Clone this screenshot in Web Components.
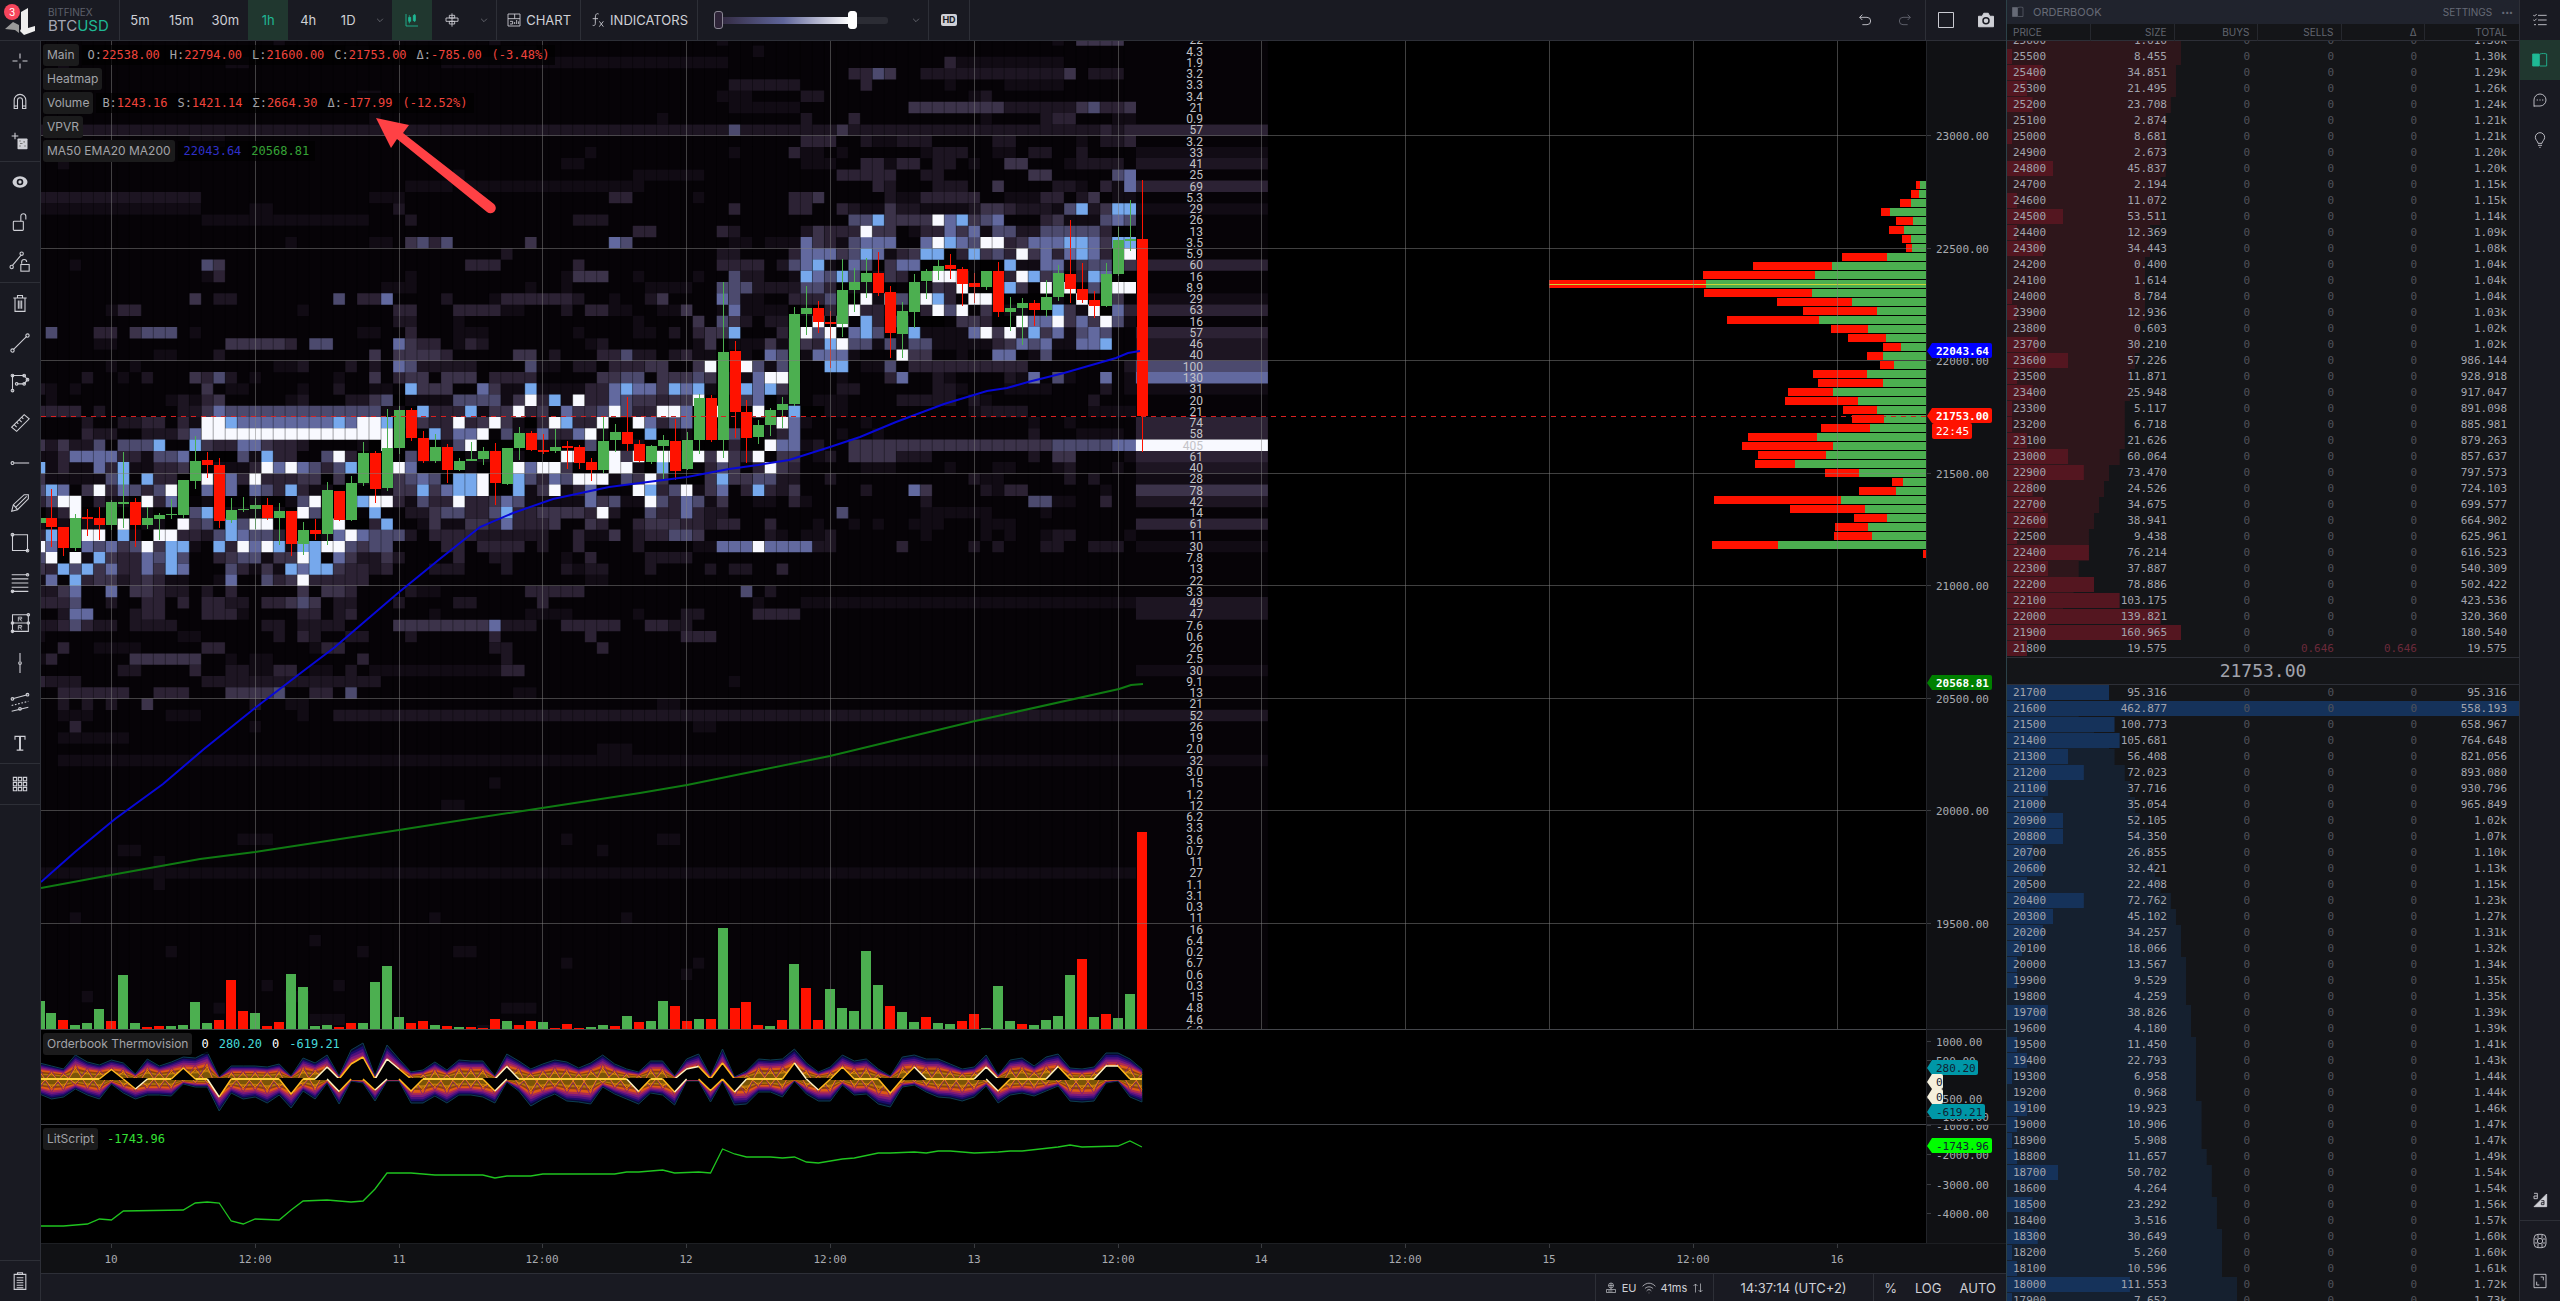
<!DOCTYPE html>
<html lang="en">
<head>
<meta charset="utf-8">
<title>BTCUSD</title>
<style>
    html, body { margin: 0; height: 100%; background: #000; }
    body {
        --panel: #191a22;
        --line: #2d2f37;
        --axis: #101114;
        --accent: #1fb894;
        --active: #20372f;
        --mono: "DejaVu Sans Mono", "Liberation Mono", monospace;
        font: 13px Inter, Roboto, sans-serif;
        color: #cfd0d6;
    }
</style>
</head>
<body>
<trade-app></trade-app>

<script>
const ICONS = {
    cross: `<path d="M12 3v6M12 15v6M3 12h6M15 12h6"/>`,
    magnet: `<path d="M5 21V11a7 7 0 0 1 14 0v10h-4V11a3 3 0 0 0-6 0v10zM5 18h4M15 18h4"/>`,
    heatpick: `<path d="M6 2v8M2 6h8"/><rect x="9" y="9" width="12" height="13" rx="1" fill="currentColor" stroke="none"/><path stroke="#777" d="M11 12h2M12 15h3M11 18h2M16 13h2M17 18h2"/>`,
    eye: `<ellipse cx="12" cy="12" rx="9" ry="7" fill="currentColor" stroke="none"/><circle cx="12" cy="12" r="3" stroke="#191a22" stroke-width="2"/>`,
    unlock: `<rect x="4" y="11" width="12" height="11" rx="1"/><path d="M13 11V5a3 3 0 0 1 6 0v4"/>`,
    linelock: `<circle cx="2" cy="18" r="2"/><circle cx="14" cy="2" r="2"/><path d="M3 16 13 4M14 14v-2a3 3 0 0 1 6 0"/><rect x="13" y="15" width="10" height="8"/>`,
    trash: `<path d="M4 6h16M9 6V3h6v3M6 6v16h12V6M10 9v10M12 9v10M14 9v10"/>`,
    trend: `<path d="M4 20 20 4"/><circle cx="3" cy="21" r="2"/><circle cx="21" cy="3" r="2"/>`,
    poly: `<path d="M3 21V3h14l4 5-4 5H8"/><circle cx="3" cy="3" r="1.6"/><circle cx="17" cy="3" r="1.6"/><circle cx="21" cy="8" r="1.6"/><circle cx="17" cy="13" r="1.6"/><circle cx="8" cy="13" r="1.6"/><circle cx="3" cy="21" r="1.6"/>`,
    ruler: `<path d="M2 17 17 2l6 5L8 22zM5 14l3 3M8 11l2 2M11 8l3 3M14 5l2 2"/>`,
    ray: `<circle cx="3" cy="12" r="1.7"/><path d="M5 12h18"/>`,
    pencil: `<path d="M2 22l2-8L17 2h5v5L9 20zM4 14l5 6M7 17 20 4"/>`,
    rect: `<path d="M3 2h18v19H3z"/><circle cx="3" cy="2" r="1.6"/><circle cx="21" cy="21" r="1.6"/>`,
    fib: `<path d="M2 2h20M2 7h20M2 12h20M2 17h20M2 22h20"/><circle cx="21" cy="2" r="1.5"/><circle cx="3" cy="22" r="1.5"/>`,
    risk: `<path d="M3 2h19v20H3zM3 12h19"/><path stroke-width="1" d="M10 10V5h4v2h-4M12 7l2 3M10 20v-5h4v2h-4M12 17l2 3"/><circle cx="22" cy="2" r="1.5"/><circle cx="22" cy="12" r="1.5"/><circle cx="3" cy="12" r="1.5"/><circle cx="3" cy="22" r="1.5"/>`,
    vline: `<path d="M12 0v10M12 14v10"/><circle cx="12" cy="12" r="1.6"/>`,
    channel: `<path d="M3 7 21 2M2 22l20-5"/><path stroke-dasharray="2 2" d="M2 15l20-5"/><circle cx="3" cy="7" r="1.6"/><circle cx="21" cy="2" r="1.6"/><circle cx="12" cy="19" r="1.6"/>`,
    text: `<path d="M11.5 4v16M12.5 4v16M8 20.5h8M6 8V4h12v4"/>`,
    grid: `<path d="M4 4h4v4H4zM10 4h4v4h-4zM16 4h4v4h-4zM4 10h4v4H4zM10 10h4v4h-4zM16 10h4v4h-4zM4 16h4v4H4zM10 16h4v4h-4zM16 16h4v4h-4z"/>`,
    clip: `<path d="M5 4h14v18H5zM9 4V2h6v2M8 8h8M8 11h8M8 14h8M8 17h8M8 20h8"/>`,
    chevron: `<path d="M5 9l7 7 7-7"/>`,
    candles: `<path d="M3 3v18h18M8 5v2M8 14v3M16 3v2M16 12v3"/><path fill="currentColor" d="M7 8h3v6H7zM14 5h3v8h-3z"/>`,
    footprint: `<path d="M12 2v20M8 5h8v4H8zM3 9h18v5H3zM8 14h8v4H8z"/>`,
    layout: `<path d="M3 3h18v18H3zM3 10h18M13 3v7M6 14h4v4H6M13 18v-3M16 18v-6M19 18v-4"/>`,
    fx: `<path d="M13 3c-4-2-5 2-5 6v8c0 3-2 4-4 3M4 10h8M14 14l6 8M20 14l-6 8"/>`,
    undo: `<path d="M8 4 4 8l4 4M4 8h11a5 5 0 0 1 0 11H8"/>`,
    redo: `<path d="M16 4l4 4-4 4M20 8H9a5 5 0 0 0 0 11h7"/>`,
    square: `<path d="M2 2h20v20H2z"/>`,
    camera: `<path fill="currentColor" d="M2 7h5l2-4h6l2 4h5v14H2z"/><circle cx="12" cy="13" r="4" fill="currentColor" stroke="#191a22" stroke-width="2"/>`,
    list: `<path d="M9 5h13M9 12h13M9 19h13M2 5l2 1 3-3M2 12l2 1 3-3M3 19h3"/>`,
    book: `<path fill="currentColor" d="M1 3h10v18H1z"/><path d="M12 3c3-1 7-1 10 0v18h-10"/>`,
    chat: `<path d="M3 22V12a9 9 0 1 1 9 9H3M7 12h2M11 12h2M15 12h2"/>`,
    bulb: `<path d="M9 17c0-3-4-5-4-9a7 7 0 0 1 14 0c0 4-4 6-4 9zM9 20h6M11 23h2"/>`,
    contrast: `<path fill="currentColor" d="M22 3v19H3z"/><path d="M3 2h5v8H3V6h5"/><path stroke="#191a22" d="M14 13h4v6h-4v-3h4"/>`,
    help: `<rect x="3" y="2" width="18" height="20" rx="6"/><circle cx="12" cy="12" r="4"/><path d="M9 3v5M15 3v5M9 16v5M15 16v5M4 9h4M4 15h4M16 9h4M16 15h4"/>`,
    expand: `<path d="M3 2h18v20H3zM13 6h4v5M11 18H7v-5"/>`,
    server: `<circle cx="12" cy="7" r="5"/><path d="M7 7h10M12 2v10M12 12v3M3 15h18v6H3zM6 18h9"/>`,
    wifi: `<path d="M1 9c7-7 15-7 22 0M5 13c4-4 10-4 14 0M8 17c2-3 6-3 8 0M12 20v1"/>`,
    updown: `<path d="M7 21V4M3 8l4-4 4 4M17 3v17M13 16l4 4 4-4"/>`
}

const icon = (name, size = 18) =>
    `<svg width="${size}" height="${size}" viewBox="0 0 24 24" fill="none" stroke="currentColor" stroke-width="1.3" aria-hidden="true">${ICONS[name]}</svg>`

const BUTTON = `
    *, *::before { box-sizing: border-box; }
    svg { display: block; flex: none; overflow: visible; }
    button {
        all: unset;
        box-sizing: border-box;
        display: flex;
        align-items: center;
        justify-content: center;
        min-width: 40px;
        height: 40px;
        cursor: pointer;
    }
    button.on { background: var(--active); color: var(--accent); }
`

/* ---------- chart data, one entry per hourly column ---------- */

const COL = 11.983, ROW = 11.257
const colX = c => c * COL - 1.5
const rowY = r => r * ROW - 6.7

// direction, body top, body bottom, wick top, wick bottom
const CANDLES = `
g477,482,477,482 r477,486,448,506 r486,507,486,515 g477,507,473,510 r476,478,468,495 r477,484,466,499 g461,484,459,489 g461,463,411,487
r461,484,457,506 g477,484,466,488 g474,478,472,499 g473,474,458,478 g439,474,439,477 g420,440,395,448 r419,424,411,437 r424,480,417,487
g469,479,457,482 g468,469,456,471 g464,468,457,488 r464,477,457,479 g470,477,462,504 r470,503,470,515 g489,503,481,514 r489,493,478,499
g449,493,441,504 r450,479,450,480 g442,479,435,480 g412,442,401,445 r412,448,410,462 g407,447,368,450 g369,407,365,413 r369,397,367,400
r397,420,390,422 g406,420,393,422 r406,429,403,442 g420,429,417,430 g418,420,401,420 g410,418,406,424 r410,442,402,464 g407,443,407,444
g392,407,386,419 r392,409,390,410 r409,411,393,413 g406,410,388,412 r405,407,400,428 r406,422,404,428 r421,429,417,440 g400,429,376,432
g391,399,383,411 r391,403,356,410 r403,420,399,421 g405,421,404,423 g399,405,394,439 r400,430,378,439 g399,428,391,429 g357,399,353,413
r357,399,354,401 g311,399,241,417 r310,371,300,397 r371,397,359,422 g384,396,379,403 g369,384,367,395 g363,369,356,387 g273,363,266,365
g267,273,245,294 r267,281,260,292 r281,283,270,327 g249,283,218,296 g241,249,227,271 g232,241,217,257 r232,252,211,255 r251,292,245,317
g270,293,261,317 g241,271,233,287 g230,240,228,258 g225,230,219,239 r224,228,213,238 r228,243,226,265 r242,246,232,262 g230,246,230,249
r230,271,221,276 g267,271,256,290 g262,267,257,304 r262,269,259,285 g256,269,239,276 g232,256,224,260 r233,248,179,262 r248,259,222,262
r259,265,250,277 g233,265,222,266 g199,233,186,235 g198,200,159,210 r198,375,139,411`.trim().split(/\s+/).map(s => [s[0], ...s.slice(1).split(",").map(Number)])

const VOLUMES = `g28 g16 r9 g4 g6 g20 r8 g54 g6 r2 r3 g3 g4 g27 g6 r9 r49 r18 g16 r3 r7 g55 g42 g3 g4 r2 r6 g6 g47 g63 g12 r6 r8 g4 r3 g2 r2 r1 r10 g8 r4 r8 g7 r1 r5 r1 g2 g4 r3 g13 r7 g8 g28 r23 r8 g10 r10 g101 r21 r27 r4 g3 r9 g65 r41 r9 g40 g21 g18 g78 g44 r23 g17 g7 r12 g6 g5 r8 r15 g1 g43 g8 r5 g4 g9 g13 g54 r70 g12 r15 g11 g35 r197`.split(" ")

// total length, buy length
const PROFILE = `10,6 15,7 26,15 45,36 30,13 37,22 24,15 20,14 84,39 173,94 223,111 377,220 222,114 149,74 123,49 199,107 95,58 78,40 43,25 59,43 46,32 113,59 108,43 138,93 141,68 83,49 74,42 105,56 178,109 184,93 168,100 171,131 101,67 34,23 67,30 212,85 136,61 72,39 91,58 92,54 214,148 3,0`.split(" ").map(s => s.split(",").map(Number))

const DEPTH = `22 4.3 1.9 3.2 3.3 3.4 21 0.9 57 3.2 33 41 25 69 5.3 29 26 13 3.5 5.9 60 16 8.9 29 63 16 57 46 40 100 130 31 20 21 74 58 405 61 40 28 78 42 14 61 11 30 7.8 13 22 3.3 49 47 7.6 0.6 26 2.5 30 9.1 13 21 52 26 19 2.0 32 3.0 15 1.2 12 6.2 3.3 3.6 0.7 11 27 1.1 3.1 0.3 11 16 6.4 0.2 6.7 0.6 0.3 15 4.8 4.6 6.2`.split(" ")

// row: column[-column]=level
const WALLS = `
0: 87-90=5
2: 34-57=2 76=4 77-85=2
3: 68-69=4 70=6 71=5 74-85=3 86=5 88-90=3
4: 0-20=1 58-63=3 69=4 81-85=2
5: 64-65=3 79=3
6: 58-63=2 73-80=5 81-86=3 87=5 88=6 89=4 90=4 91=5
7: 64=3 84=3 85-86=4
8: 0-57=3 58=6 59-66=3 67=5 68-88=3 89=4 90=3 91=4
9: 64-66=4 72=3 89=3
10: 58=2 75-77=3
11: 69-70=4 72-73=4 81-82=5
12: 50-55=2 67-69=4 71=4 83-84=5 90=6 91=7
13: 31-33=2 36-50=2 75-77=3 80=5 91=7
14: 0-13=3 48-49=4 65=5 74-78=4 88=5
15: 0-13=2 30=3 63-64=4 71=5 86=6 87=8 89=5 90-91=8
16: 14-27=2 31=3 45-47=3 69=6 70=8 74=5 75=9 76=7 77=8 78=5 79=6 80=7
17: 50-51=4 57=4 65=5 69=9 70-71=5 78=7 85-88=6
18: 28-29=2 31=5 32=6 33=4 34=6 41=5 48=7 49=6 64=7 68=6 69-71=7 75=9 76=8 77=7 79-80=9 82=5 83-85=7 86-87=8 88=7 89=5 90-91=8
19: 39=3 65=7 69=8 70=7 72=4 74=8 78=8 80=6 82=9 84=7 86=7 87=8 88=7 91=9
20: 14=6 15=5 36-38=4 45=4 64=7 65=8 69=6 72-73=7 81=8 84-85=7 88-89=6
21: 15=4 45-47=5 58=6 64=8 67=8 68=6 75-77=9 82=9 83=8 85=6 89=7
22: 58=6 60-63=3 65=6 77=9 81=8 84=9 86=9 90-91=9
23: 13=5 25=6 27-28=4 29=7 39-44=4 52=5 58=6 64-65=4 66=6 69=9 71=9 74=9 75=8 78-79=9 87=9
24: 7-8=4 31=4 35-38=4 54=5 58=7 68=9 75=9 77=9 85=8 88=9 90=7 91=4
25: 65=9 67=9 69=8 72=7 78=5 82=9 84=7 85=9 89=9
26: 1=6 5-6=4 8=5 9-11=6 31=4 64=9 65=6 66=9 68=7 69=8 70=6 73=8 78=7 79=9 81=9 83=8 85=7 87=6 88=7
27: 16-20=5 21=4 23-24=6 32-33=4 61=5 63-64=5 67=9 71=6 74=6 83=6 89=8
28: 28=5 30-31=5 40-41=5 49=6 61=7 66-67=7 72=9 84=6
29: 31=6 41=6 48-50=4 56=9 59=9 66-67=8 73-82=4
30: 13=5 14=4 15=6 28=5 32=5 34=5 61-62=9 72=7 83=7 85=6 89=7
31: 14=5 31=8 37=7 38=5 41=8 49=8 53=8 55=8 59=8 61=8
32: 28=5 37=6 41=9 43=8 45=9 53=5 55=9
33: 15=7 16-28=6 32=8 36=8 40=9 48=9 52-53=9 57=9 60=9 63=8
34: 14-15=9 16=8 17-24=7 25=8 26=7 27-28=9 29=8 35=9 38=9 43=9 44=8 47=9 50=9 62=9 63=7
35: 14-29=9 36=7 37=9 46=9 51=8 63=7
36: 5=6 9=6 10=8 13=8 29=9 61=9 62-63=7 68-84=5 85-89=6 90-91=7 92=9
37: 6=7 17=6 19=8 25=9 44-45=9 48=9 50=9 52-53=9 55=9 57=9 60=9 68-71=5 85-86=5
38: 0=8 7=8 19=9 21=9 30=9 40=9 42-43=9 48-49=9 61=9
39: 7=8 9=8 14=9 18=9 35-36=8 37=9 45-47=9 51=9 57=8
40: 1=8 5=9 11=9 14=7 16=7 18=7 21=8 32=8 35-36=8 37=9 40=8 43=9 51=8 54=9 57=7 60=8 73=7 74=5 81-82=4
41: 2-3=9 9=9 23=9 27=8 35=9 39=7 51=9 54=7 83-84=6 89=4
42: 3=9 14=8 22=9 39=8 47=9 54=7 67=6
43: 7=9 12=9 16=8 18-19=9 25=9 29=8 33=5 39=7 51-52=5
44: 1=8 4-5=9 10-11=9 16=8 26=9 37-42=3
45: 0=9 6=7 9=9 11=8 17=9 19=9 20=8 22-23=8 24=9 29=6 57-59=7 60=9 61-64=7 72=4
46: 1=9 3=9 5=8 9=7 11=8 22=9 23=8 29=5
47: 2=8 4=8 6=7 9=7 11=8 12=7 16=6 22=7 23-24=8 35=3 39=3
48: 3=8 5-6=5 9=5 22=9
49: 2=5 3=7 22=5 24-25=5 41-45=4 59=6
50: 1=4 3=6 9-10=4 14-15=4 64-91=2
51: 2=3 9-10=4 22=4 60-63=4
52: 2=4 3=6 4=4 30-37=5 38=7 44-48=4
53: 22=4 31=3 54-56=4
54: 14-15=4 47=4
55: 1=4 8-13=5 27=4 39=3
56: 7-8=3 13=4 29-38=2 39-40=4
57: 0=4 14-28=3
58: 2-7=4 10-12=4 16-19=5 20=6 23-24=4 26=6
59: 2=3 4=3 6=3 9=5 18=3
60: 11-13=2 25-91=3
61: 3=4
62: 2-7=2
64: 2-91=2
74: 0-91=2
79: 0-91=1`

const LEVELS = ["#020102", "#060307", "#110b14", "#1d1522", "#2c2234", "#3c334a", "#4c4a6e", "#62699f", "#76a8ec", "#f8f9ff"]

const MA50 = "41,882 75,852 115,819 163,784 204,749 255,708 302,672 335,647 398,593 441,558 480,527 513,513 553,499 609,487 640,483 687,477 729,469 758,465 789,460 830,447 860,437 896,422 944,404 987,391 1007,388 1028,382 1064,373 1116,358 1128,353 1140,351"
const MA200 = "41,888 111,875 200,859 255,852 399,830 463,820 542,808 640,793 687,785 746,773 830,756 975,721 1119,689 1131,685 1143,684"

// thermovision envelope above and below zero
const THERMO = `16,15 13,20 10,18 24,10 17,16 14,20 19,5 16,14 5,20 20,16 13,16 17,17 22,5 21,8 27,8 2,32 13,14 13,20 13,18 12,24 15,16 3,29 21,12 16,20 24,4 3,25 29,2 36,4 3,22 34,2 20,2 7,24 9,24 17,17 9,24 19,16 18,16 18,18 3,24 25,3 18,12 10,27 15,20 19,15 17,22 11,23 16,25 24,8 15,15 10,20 7,25 18,14 18,16 3,26 20,2 25,2 3,23 30,2 2,26 8,25 20,13 19,13 20,18 30,2 16,15 7,22 12,22 24,6 18,16 20,15 10,25 3,28 22,8 24,6 20,13 20,18 15,19 10,22 12,18 24,7 4,24 19,16 21,14 13,17 22,12 25,7 11,22 10,23 12,22 26,4 26,2 20,18 10,23`.split(" ").map(s => s.split(",").map(Number))

const LIT = "0,101 2,101 4,99 5,94 6,95 7,86 12,85 13,78 14,77 15,78 16,96 17,99 18,94 20,95 21,85 22,76 24,75 26,77 27,76 28,64 29,48 31,48 33,50 37,50 38,53 39,51 41,51 42,49 48,49 49,47 50,47 52,45 53,48 55,47 56,48 57,24 58,29 59,32 61,32 62,33 63,32 64,37 65,38 66,36 67,34 68,33 70,28 71,28 73,27 74,28 75,26 76,26 78,28 80,27 81,26 82,26 85,22 86,20 87,22 90,21 91,16 92,22"

function heatLevels() {
    let seed = 20607
    const rand = () => (seed = (seed * 1103515245 + 12345) % 2147483648) / 2147483648
    const rows = []
    for (let r = 0; r < 89; r++) {
        const row = []
        for (let c = 0; c < 92; c++) {
            const [, top, bottom] = CANDLES[c]
            const y = rowY(r) + ROW / 2
            const d = y < top ? (top - y) / ROW : y > bottom ? (y - bottom) / ROW : 0
            const quiet = c > 63 && y > bottom && d > 4
            const n = rand(), keep = rand() < .3 && c > 0
            let level
            if (d < 1) level = n < .7 ? 0 : 2
            else if (quiet) level = r > 45 ? 1 : n < .7 ? 1 : n < .9 ? 2 : 3
            else if (d < 3) level = n < .02 ? 9 : n < .06 ? 8 : n < .24 ? 7 : n < .42 ? 6 : n < .65 ? 5 : n < .85 ? 4 : 1
            else if (d < 6) level = n < .06 ? 7 : n < .2 ? 6 : n < .42 ? 5 : n < .7 ? 4 : 2
            else if (d < 9) level = n < .04 ? 5 : n < .2 ? 4 : n < .45 ? 3 : 1
            else if (d < 15) level = n < .02 ? 4 : n < .1 ? 3 : n < .25 ? 2 : 1
            else level = n < .03 ? 2 : 1
            row.push(keep && d >= 3 ? row[c - 1] : level)
        }
        rows.push(row)
    }
    for (const line of WALLS.trim().split("\n")) {
        const [r, cells] = line.split(": ")
        for (const cell of cells.split(" ")) {
            const [span, level] = cell.split("=")
            const [from, to = from] = span.split("-")
            for (let c = +from; c <= +to; c++) rows[r][c] = +level
        }
    }
    return rows
}

class TradeApp extends HTMLElement {
    constructor() {
        super()
        this.attachShadow({mode: "open"}).innerHTML = `
            <style>
                :host { display: grid; grid-template-columns: minmax(0, 1fr) 513px 40px; height: 100vh; overflow: hidden; }
                main { display: grid; grid-template: 41px minmax(0, 1fr) 28px / 41px minmax(0, 1fr); border-right: 1px solid #2c4148; }
                top-bar { grid-column: 1 / -1; }
                draw-tools { grid-row: 2 / 4; }
            </style>
            <main>
                <top-bar></top-bar>
                <draw-tools></draw-tools>
                <chart-area></chart-area>
                <status-bar></status-bar>
            </main>
            <order-book></order-book>
            <side-nav></side-nav>
        `
    }
}

class TopBar extends HTMLElement {
    constructor() {
        super()
        this.attachShadow({mode: "open"}).innerHTML = `
            <style>
                ${BUTTON}
                :host { display: flex; background: var(--panel); border-bottom: 1px solid var(--line); }
                .group { display: flex; border-right: 1px solid var(--line); }
                .brand { width: 120px; gap: 8px; align-items: center; padding-left: 4px; }
                .logo { position: relative; width: 36px; height: 36px; }
                .badge {
                    position: absolute; left: 0; top: 2px; width: 16px; height: 16px; border-radius: 8px;
                    background: #f5455c; color: #fff; font-size: 10px; line-height: 16px; text-align: center;
                }
                .pair { font-size: 15px; line-height: 16px; color: #a5a7b4; }
                .pair small { display: block; font-size: 10px; line-height: 12px; color: #5d606b; }
                .pair b { font-weight: 400; color: var(--accent); }
                .times button { padding: 0 9px; }
                .times button.drop { min-width: 24px; padding: 0; }
                button.drop { min-width: 24px; color: #9a9ca5; }
                .menu button { padding: 0 9px; gap: 4px; }
                .range { position: relative; width: 174px; height: 40px; margin: 0 16px; }
                .range::before {
                    content: ""; position: absolute; left: 0; right: 0; top: 17px; height: 7px; border-radius: 3px;
                    background: linear-gradient(90deg, #2e2438, #5f659a 40%, #fff 78%, #2b2c34 78%);
                }
                input {
                    position: absolute; inset: 0; width: 174px; height: 40px; margin: 0;
                    appearance: none; background: none; pointer-events: none;
                }
                input::-webkit-slider-thumb {
                    appearance: none; width: 9px; height: 18px; border-radius: 3px; pointer-events: auto;
                    background: #fff; border: 1px solid #fff;
                }
                input.low::-webkit-slider-thumb { background: #2e2438; border-color: #8b8794; }
                .hd span { background: #cfd0d6; color: #191a22; font-size: 9px; line-height: 12px; font-weight: 700; padding: 0 1px; border-radius: 2px; }
                .space { flex: 1; border-right: 1px solid var(--line); display: flex; justify-content: flex-end; }
                .dim { color: #666873; }
            </style>
            <div class="group brand">
                <div class="logo">
                    <svg width="36" height="36" viewBox="0 0 36 36"><path fill="#999" d="M1 27 9 20l6 3v8l-4-3z"/><path fill="#eee" d="M17 10l7-4v20l7-2v5l-11 4-4-4 1-2z"/></svg>
                    <span class="badge">3</span>
                </div>
                <div class="pair"><small>BITFINEX</small>BTC<b>USD</b></div>
            </div>
            <div class="group times">
                <button>5m</button><button>15m</button><button>30m</button><button class="on">1h</button><button>4h</button><button>1D</button>
                <button class="drop" aria-label="More intervals">${icon("chevron", 10)}</button>
                <button class="on" aria-label="Candles">${icon("candles", 16)}</button>
                <button aria-label="Footprint">${icon("footprint", 16)}</button>
                <button class="drop" aria-label="More styles">${icon("chevron", 10)}</button>
            </div>
            <div class="group menu"><button>${icon("layout", 16)}CHART</button></div>
            <div class="group menu"><button>${icon("fx", 16)}INDICATORS</button></div>
            <div class="group">
                <div class="range">
                    <input class="low" type="range" value="0" aria-label="Heatmap low">
                    <input type="range" value="81" aria-label="Heatmap high">
                </div>
                <button class="drop" aria-label="Heatmap colours">${icon("chevron", 10)}</button>
            </div>
            <div class="group hd"><button><span>HD</span></button></div>
            <div class="space">
                <button aria-label="Undo">${icon("undo", 16)}</button>
                <button class="dim" aria-label="Redo">${icon("redo", 16)}</button>
            </div>
            <button aria-label="Select area">${icon("square")}</button>
            <button aria-label="Screenshot">${icon("camera")}</button>
        `
    }
}

class DrawTools extends HTMLElement {
    constructor() {
        super()
        const button = name => `<button aria-label="${name}">${icon(name, 20)}</button>`
        const groups = [
            ["cross", "magnet", "heatpick"],
            ["eye", "unlock", "linelock"],
            ["trash", "trend", "poly", "ruler", "ray", "pencil", "rect", "fib", "risk", "vline", "channel", "text"],
            ["grid"]
        ]
        this.attachShadow({mode: "open"}).innerHTML = `
            <style>
                ${BUTTON}
                :host { display: flex; flex-direction: column; background: var(--panel); border-right: 1px solid var(--line); }
                .group { border-bottom: 1px solid var(--line); }
                .end { margin-top: auto; border-top: 1px solid var(--line); }
            </style>
            ${groups.map(g => `<div class="group">${g.map(button).join("")}</div>`).join("")}
            <div class="end">${button("clip")}</div>
        `
    }
}

class SideNav extends HTMLElement {
    constructor() {
        super()
        const button = (name, on = "") => `<button class="${on}" aria-label="${name}">${icon(name, 16)}</button>`
        this.attachShadow({mode: "open"}).innerHTML = `
            <style>
                ${BUTTON}
                :host { display: flex; flex-direction: column; background: var(--panel); }
                .gap { flex: 1; }
                .end { border-top: 1px solid var(--line); }
            </style>
            ${button("list")}${button("book", "on")}${button("chat")}${button("bulb")}
            <div class="gap"></div>
            ${button("contrast")}
            <div class="end">${button("help")}${button("expand")}</div>
        `
    }
}

class StatusBar extends HTMLElement {
    constructor() {
        super()
        this.attachShadow({mode: "open"}).innerHTML = `
            <style>
                ${BUTTON}
                :host { display: flex; justify-content: flex-end; background: var(--panel); border-top: 1px solid var(--line); }
                div { display: flex; align-items: center; justify-content: center; border-left: 1px solid var(--line); }
                .net { width: 118px; gap: 5px; font-size: 11px; }
                .clock { width: 160px; }
                .scale { width: 133px; gap: 18px; }
                button { min-width: 0; height: 27px; }
            </style>
            <div class="net">${icon("server", 12)}<span>EU</span>${icon("wifi", 14)}<span>41ms</span>${icon("updown", 12)}</div>
            <div class="clock">14:37:14 (UTC+2)</div>
            <div class="scale"><button>%</button><button>LOG</button><button>AUTO</button></div>
        `
    }
}

/// One legend row: the indicator name, with its values slotted in.
class PlotLegend extends HTMLElement {
    constructor() {
        super()
        this.attachShadow({mode: "open"}).innerHTML = `
            <style>
                :host { display: flex; align-items: center; gap: 3px; height: 22px; }
                .name { background: #1b1b1c; color: #a2a3a8; border-radius: 3px; padding: 0 4px; font-size: 12px; line-height: 22px; }
                .values { display: flex; gap: 10px; padding: 0 6px; font: 12px/20px var(--mono); color: #a2a3a8; background: #000a; }
            </style>
            <span class="name">${this.getAttribute("name")}</span>
            <span class="values"><slot></slot></span>
        `
    }
}

class ChartArea extends HTMLElement {
    constructor() {
        super()
        this.attachShadow({mode: "open"}).innerHTML = `
            <style>
                :host {
                    display: grid; background: #000; min-height: 0;
                    grid-template: minmax(0, 1fr) 95px 119px 30px / minmax(0, 1fr) 80px;
                }
                .plot { position: relative; overflow: hidden; min-width: 0; }
                .axis { background: var(--axis); border-left: 1px solid #222429; overflow: hidden; }
                .sub { border-top: 1px solid #44464b; }
                .axis.sub { border-top-color: var(--line); }
                .time { grid-column: 1 / -1; background: var(--axis); border-top: 1px solid #1d1f23; }
                svg { display: block; width: 100%; height: 100%; }
                .legend { position: absolute; left: 2px; top: 3px; display: grid; gap: 2px; justify-items: start; }
                .arrow { position: absolute; left: 330px; top: 74px; width: 126px; height: 100px; }
                text { font: 11px var(--mono); fill: #a9abb0; }
                .depth text { font: 12px Roboto, sans-serif; fill: #c3c3c8; text-anchor: end; }
                .tag { fill: #fff; }
                .tag.bold { font-weight: 700; }
                .tag.dark { fill: #123; }
                i { font-style: normal; color: #f0443c; }
                plot-legend b { font-weight: 400; }
            </style>
            <div class="plot">
                <svg id="main"></svg>
                <div class="legend">
                    <plot-legend name="Main"><span>O:<i>22538.00</i></span><span>H:<i>22794.00</i></span><span>L:<i>21600.00</i></span><span>C:<i>21753.00</i></span><span>Δ:<i>-785.00</i></span><span><i>(-3.48%)</i></span></plot-legend>
                    <plot-legend name="Heatmap"></plot-legend>
                    <plot-legend name="Volume"><span>B:<i>1243.16</i></span><span>S:<i>1421.14</i></span><span>Σ:<i>2664.30</i></span><span>Δ:<i>-177.99</i></span><span><i>(-12.52%)</i></span></plot-legend>
                    <plot-legend name="VPVR"></plot-legend>
                    <plot-legend name="MA50 EMA20 MA200"><b style="color:#3030c8">22043.64</b><b style="color:#36a336">20568.81</b></plot-legend>
                </div>
                <svg class="arrow" viewBox="0 0 126 100"><path fill="#ff4145" d="M5 3 38 10l-6 8 91 71a5 5 0 0 1-7 8L26 24l-6 9z"/></svg>
            </div>
            <div class="axis"><svg id="price"></svg></div>
            <div class="plot sub">
                <svg id="thermo"></svg>
                <div class="legend"><plot-legend name="Orderbook Thermovision"><b style="color:#fff">0</b><b style="color:#45d9d9">280.20</b><b style="color:#fff">0</b><b style="color:#45d9d9">-619.21</b></plot-legend></div>
            </div>
            <div class="axis sub"><svg id="thermo-axis"></svg></div>
            <div class="plot sub">
                <svg id="lit"></svg>
                <div class="legend"><plot-legend name="LitScript"><b style="color:#35e035">-1743.96</b></plot-legend></div>
            </div>
            <div class="axis sub"><svg id="lit-axis"></svg></div>
            <div class="time"><svg id="time"></svg></div>
        `
    }

    connectedCallback() {
        const set = (id, html) => this.shadowRoot.getElementById(id).innerHTML = html
        const width = this.clientWidth - 80
        set("main", this.heatmap() + this.profile(width) + this.candles() + this.lines(width) + this.depth())
        set("thermo", this.thermo())
        set("lit", `<polyline fill="none" stroke="#1fc41f" stroke-width="1.3" points="${LIT.split(" ").map(p => p.split(",")).map(([c, y]) => `${colX(+c)},${y}`).join(" ")}"/>`)
        this.axes(set)
    }

    heatmap() {
        const paths = LEVELS.map(() => "")
        const cell = (c, r, level, w = COL) => {
            paths[level] += `M${(c * COL - 7.5).toFixed(1)} ${rowY(r).toFixed(1)}h${w}v${ROW + .2}h-${w}z`
        }
        heatLevels().forEach((row, r) => {
            row.forEach((level, c) => cell(c, r, level))
            const v = +DEPTH[r]
            const level = v > 200 ? 9 : v > 110 ? 7 : v > 90 ? 6 : v > 76 ? 5 : v > 55 ? 4 : v > 38 ? 3 : v > 27 ? 2 : 1
            cell(92, r, level, 132)
        })
        let seams = ""
        for (let c = 0; c < 92; c++) seams += `M${(c * COL - 7.5).toFixed(1)} 0V990`
        return paths.map((d, i) => `<path fill="${LEVELS[i]}" d="${d}"/>`).join("")
            + `<path stroke="#000" stroke-opacity=".35" d="${seams}"/>`
    }

    candles() {
        const color = {g: "#4caf50", r: "#ff1200"}
        let out = ""
        CANDLES.forEach(([dir, top, bottom, high, low], c) => {
            const x = Math.round(colX(c))
            out += `<path stroke="${color[dir]}" d="M${x + .5} ${high}V${low}"/><rect fill="${color[dir]}" x="${x - 5}" y="${top}" width="11" height="${Math.max(1, bottom - top)}"/>`
        })
        VOLUMES.forEach((v, c) => {
            const h = +v.slice(1)
            out += `<rect fill="${color[v[0]]}" x="${Math.round(colX(c)) - 5}" y="${988 - h}" width="10" height="${h}"/>`
        })
        return out
    }

    profile(width) {
        return PROFILE.map(([total, buys], i) => {
            const y = 140 + i * 9
            return `<rect fill="#ff1200" x="${width - total}" y="${y}" width="${total - buys}" height="8"/><rect fill="#4caf50" x="${width - buys}" y="${y}" width="${buys}" height="8"/>`
        }).join("") + `<path stroke="#c9d435" d="M${width - 377} 243.5H${width}"/>`
    }

    lines(width) {
        let grid = ""
        for (let k = 0; k < 8; k++) grid += `M0 ${Math.round(94 + k * 112.57) + .5}H${width}`
        for (let k = 0; k < 13; k++) grid += `M${Math.round(70 + k * 143.8) + .5} 0V988`
        return `<path stroke="#808080" stroke-opacity=".5" d="${grid}"/>
            <g transform="translate(-41 -41)" fill="none" stroke-width="2">
                <polyline stroke="#0808d8" points="${MA50}"/>
                <polyline stroke="#0f7a12" points="${MA200}"/>
            </g>
            <path stroke="#d82020" stroke-dasharray="5 5" d="M0 375.5H${width}"/>`
    }

    depth() {
        return `<g class="depth">${DEPTH.map((v, r) => `<text x="1162" y="${Math.round(rowY(r) + 10)}">${v}</text>`).join("")}</g>`
    }

    thermo() {
        const mid = 49
        const x = c => colX(c).toFixed(1)
        const band = f => {
            const up = THERMO.map(([t], c) => `${x(c)},${mid - t * f}`)
            const down = THERMO.map(([, b], c) => `${x(c)},${mid + b * f}`).reverse()
            return up.concat(down).join(" ")
        }
        const colors = [[1, "#070a34"], [.92, "#1a0c6a"], [.84, "#4b107c"], [.75, "#7d1a7a"], [.66, "#b02c50"], [.57, "#de5a14"], [.46, "#8c4208"], [.36, "#b4780c"], [.26, "#7a5408"]]
        let out = colors.map(([f, fill], i) => `<polygon fill="${fill}" stroke="${i ? "none" : "#0d3f50"}" points="${band(f)}"/>`).join("")
        // criss-cross of neighbouring levels inside the band
        const weave = (f, off, stroke) => `<polyline fill="none" stroke="${stroke}" points="${THERMO.map(([t, b], c) => `${x(c)},${mid + ((c + off) % 2 ? -t : b) * f}`).join(" ")}"/>`
        out += weave(.66, 0, "#8a2468") + weave(.66, 1, "#8a2468") + weave(.45, 0, "#ee8410") + weave(.45, 1, "#ee8410")
        out += `<path stroke="#fbd13a" stroke-width="2" d="M0 ${mid}H${x(92)}"/>`
        const peaks = sign => {
            const pts = THERMO.map(([t, b]) => {
                const [big, small] = sign < 0 ? [t, b] : [b, t]
                return mid + sign * (small < 8 && big > 15 ? Math.max(big * .5, big - 14) : 0)
            })
            let fills = "", edges = "", glints = ""
            for (let c = 0; c < 92; c++) {
                const a = pts[c], b = pts[c + 1]
                if (a == mid && b == mid) continue
                fills += `M${x(c)} ${mid - sign}V${a}L${x(c + 1)} ${b}V${mid - sign}z`
                const seg = `M${x(c)} ${a}L${x(c + 1)} ${b}`
                if (c % 5 < 3) edges += seg
                else glints += seg
            }
            return `<path d="${fills}"/><path stroke="#ffb81e" stroke-width="1.5" d="${edges}"/><path stroke="#fff3c4" stroke-width="1.5" d="${glints}"/>`
        }
        return out + peaks(-1) + peaks(1)
    }

    axes(set) {
        const label = (y, t) => `<path stroke="#3a3c40" d="M0 ${y + .5}h4"/><text x="9" y="${y + 5}">${t}</text>`
        const tag = (y, t, fill, cls = "bold") => {
            const w = t.length * 7 + 5
            return `<path fill="${fill}" d="M0 ${y}l5-8h${w - 3}q2 0 2 2v11q0 2-2 2H5z"/><text class="tag ${cls}" x="9" y="${y + 4}">${t}</text>`
        }
        set("price", [23000, 22500, 22000, 21500, 21000, 20500, 20000, 19500].map((p, k) => label(Math.round(94 + k * 112.57), p + ".00")).join("")
            + tag(310, "22043.64", "#0000ff") + tag(375, "21753.00", "#ff1200")
            + `<rect x="5" y="382" width="40" height="16" rx="2" fill="#ff1200"/><text class="tag" x="9" y="394">22:45</text>`
            + tag(642, "20568.81", "#008000"))
        set("thermo-axis", label(11, "1000.00") + label(30, "500.00") + label(68, "-500.00") + label(86, "-1000.00")
            + tag(38, "280.20", "#0097a7", "dark") + tag(52, "0", "#f5f0dc", "dark") + tag(67, "0", "#f5f0dc", "dark") + tag(82, "-619.21", "#0097a7", "dark"))
        set("lit-axis", label(0, "-1000.00") + label(29, "-2000.00") + label(59, "-3000.00") + label(88, "-4000.00") + tag(21, "-1743.96", "#00ff00", "dark"))
        set("time", ["10", "12:00", "11", "12:00", "12", "12:00", "13", "12:00", "14", "12:00", "15", "12:00", "16"].map((t, k) => {
            const x = Math.round(70 + k * 143.8)
            return `<path stroke="#3a3c40" d="M${x + .5} 0v4"/><text x="${x}" y="19" text-anchor="middle">${t}</text>`
        }).join(""))
    }
}

const ASKS = `25600 1.616 1.30k|25500 8.455 1.30k|25400 34.851 1.29k|25300 21.495 1.26k|25200 23.708 1.24k|25100 2.874 1.21k|25000 8.681 1.21k|24900 2.673 1.20k|24800 45.837 1.20k|24700 2.194 1.15k|24600 11.072 1.15k|24500 53.511 1.14k|24400 12.369 1.09k|24300 34.443 1.08k|24200 0.400 1.04k|24100 1.614 1.04k|24000 8.784 1.04k|23900 12.936 1.03k|23800 0.603 1.02k|23700 30.210 1.02k|23600 57.226 986.144|23500 11.871 928.918|23400 25.948 917.047|23300 5.117 891.098|23200 6.718 885.981|23100 21.626 879.263|23000 60.064 857.637|22900 73.470 797.573|22800 24.526 724.103|22700 34.675 699.577|22600 38.941 664.902|22500 9.438 625.961|22400 76.214 616.523|22300 37.887 540.309|22200 78.886 502.422|22100 103.175 423.536|22000 139.821 320.360|21900 160.965 180.540|21800 19.575 19.575`
const BIDS = `21700 95.316 95.316|21600 462.877 558.193|21500 100.773 658.967|21400 105.681 764.648|21300 56.408 821.056|21200 72.023 893.080|21100 37.716 930.796|21000 35.054 965.849|20900 52.105 1.02k|20800 54.350 1.07k|20700 26.855 1.10k|20600 32.421 1.13k|20500 22.408 1.15k|20400 72.762 1.23k|20300 45.102 1.27k|20200 34.257 1.31k|20100 18.066 1.32k|20000 13.567 1.34k|19900 9.529 1.35k|19800 4.259 1.35k|19700 38.826 1.39k|19600 4.180 1.39k|19500 11.450 1.41k|19400 22.793 1.43k|19300 6.958 1.44k|19200 0.968 1.44k|19100 19.923 1.46k|19000 10.906 1.47k|18900 5.908 1.47k|18800 11.657 1.49k|18700 50.702 1.54k|18600 4.264 1.54k|18500 23.292 1.56k|18400 3.516 1.57k|18300 30.649 1.60k|18200 5.260 1.60k|18100 10.596 1.61k|18000 111.553 1.72k|17900 7.652 1.73k`

class OrderBook extends HTMLElement {
    constructor() {
        super()
        const row = line => {
            const [price, size, total] = line.split(" ")
            const sum = total.endsWith("k") ? parseFloat(total) * 1000 : +total
            // the bars step in whole percents
            const bar = Math.floor(size / 462.877 * 100), depth = Math.floor(sum / 3800 * 100)
            const hit = price == "21800"
            const sold = hit ? `<td class="hit">0.646</td>` : `<td class="nil">0</td>`
            return `<tr style="--bar:${bar}%;--depth:${depth}%"><td>${price}</td><td>${size}</td><td class="nil">0</td>${sold}${sold}<td>${total}</td></tr>`
        }
        const cols = `<colgroup><col><col><col><col><col><col class="last"></colgroup>`
        const table = (name, rows) => `<table class="${name}" aria-label="${name}">${cols}<tbody>${rows.split("|").map(row).join("")}</tbody></table>`
        this.attachShadow({mode: "open"}).innerHTML = `
            <style>
                ${BUTTON}
                :host {
                    display: flex; flex-direction: column; min-height: 0; overflow: hidden;
                    background: #141518; border-right: 1px solid var(--line); color: #a2a4ad;
                }
                header { display: flex; align-items: center; gap: 9px; height: 24px; padding: 0 6px 0 5px; background: #20232d; color: #666a76; font-size: 11px; flex: none; }
                header button { min-width: 0; height: 24px; font-size: 10px; }
                header button:first-of-type { margin-left: auto; }
                header button:last-of-type { font-size: 7px; }
                table { width: 100%; table-layout: fixed; border-collapse: collapse; flex: none; }
                col { width: 84px; }
                col:nth-child(odd) { width: 83px; }
                col.last { width: auto; }
                td, th { padding: 0 7px; text-align: right; font-weight: 400; }
                td:first-child, th:first-child { text-align: left; padding-left: 6px; }
                td:last-child, th:last-child { padding-right: 12px; }
                th { height: 16px; border-right: 1px solid #26282e; font-size: 10px; line-height: 16px; color: #62656f; }
                th:last-child { border-right: 0; }
                .head { border-bottom: 1px solid var(--line); }
                td { height: 16px; font: 11px/16px var(--mono); }
                .side { flex: 1 1 0; min-height: 0; display: flex; flex-direction: column; overflow: hidden; }
                .side.up { justify-content: flex-end; }
                tbody tr {
                    background:
                        linear-gradient(var(--strong), var(--strong)) 0 0 / var(--bar) 15px no-repeat,
                        linear-gradient(var(--weak), var(--weak)) 0 0 / var(--depth) 16px no-repeat;
                }
                .asks { --strong: #541620; --weak: #2e161b; }
                .bids { --strong: #15325a; --weak: #15202f; }
                .nil { color: #50525a; }
                .hit { color: #6b2a3a; }
                .last-price { flex: none; height: 28px; border: solid var(--line); border-width: 1px 0; font: 18px/26px var(--mono); text-align: center; color: #a2a4ad; }
            </style>
            <header>${icon("book", 12)}<span>ORDERBOOK</span><button>SETTINGS</button><button aria-label="More">•••</button></header>
            <table class="head">${cols}<thead><tr><th>PRICE</th><th>SIZE</th><th>BUYS</th><th>SELLS</th><th>Δ</th><th>TOTAL</th></tr></thead></table>
            <div class="side up">${table("asks", ASKS)}</div>
            <div class="last-price">21753.00</div>
            <div class="side">${table("bids", BIDS)}</div>
        `
    }
}

customElements.define("plot-legend", PlotLegend)
customElements.define("top-bar", TopBar)
customElements.define("draw-tools", DrawTools)
customElements.define("side-nav", SideNav)
customElements.define("status-bar", StatusBar)
customElements.define("chart-area", ChartArea)
customElements.define("order-book", OrderBook)
customElements.define("trade-app", TradeApp)
</script>
</body>
</html>
